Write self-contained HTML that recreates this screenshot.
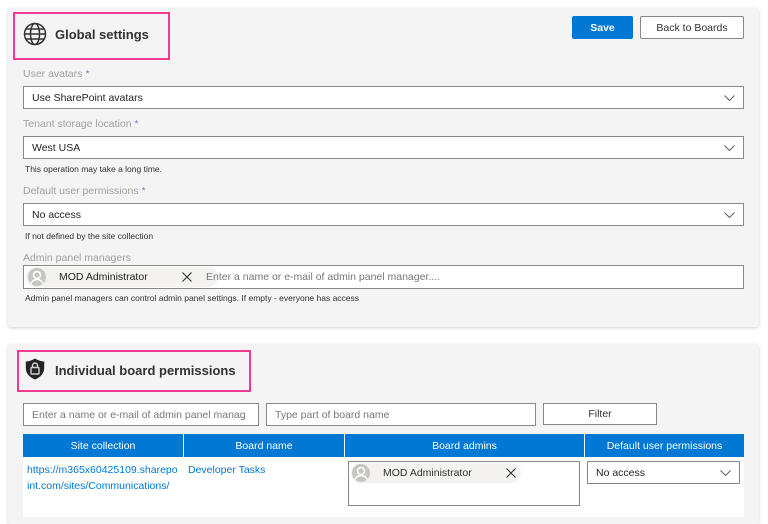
<!DOCTYPE html>
<html><head><meta charset="utf-8"><style>
*{box-sizing:border-box;margin:0;padding:0}
body{width:768px;height:512px;overflow:hidden;background:#fff;font-family:"Liberation Sans",sans-serif;color:#323130;position:relative}
.a{position:absolute}
.card{position:absolute;left:8px;width:751px;background:#f4f4f4;border-radius:3px;box-shadow:0 1px 3px rgba(0,0,0,.18)}
.pink{position:absolute;border:2px solid #f3398f}
.title{position:absolute;font-size:13px;font-weight:bold;color:#323130}
.lbl{position:absolute;left:23px;font-size:10.5px;color:#a19f9d}
.lbl b{color:#6b8fc4;font-weight:normal}
.box{position:absolute;background:#fff;border:1px solid #8a8886;font-size:10.5px;color:#201f1e;padding-left:8px;display:flex;align-items:center;white-space:nowrap;overflow:hidden}
.help{position:absolute;left:25px;font-size:8.5px;color:#323130}
.chev{position:absolute;right:8px;top:50%;margin-top:-3px}
.th{position:absolute;top:434px;height:23px;background:#0078d4;color:#fff;font-size:10.5px;display:flex;align-items:center;justify-content:center}
.ph{color:#777}
</style></head><body>
<div class="card" style="top:8px;height:319px"></div>
<div class="card" style="top:344px;height:180px"></div>

<div class="pink" style="left:13px;top:12px;width:157px;height:48px"></div>
<svg class="a" style="left:23px;top:22px" width="24" height="24" viewBox="0 0 24 24" fill="none" stroke="#323130" stroke-width="1.5"><circle cx="12" cy="12" r="10.5"/><ellipse cx="12" cy="12" rx="4.5" ry="10.5"/><line x1="1.5" y1="12" x2="22.5" y2="12"/><line x1="3" y1="7" x2="21" y2="7"/><line x1="3" y1="17" x2="21" y2="17"/></svg>
<div class="title" style="left:55px;top:27px">Global settings</div>

<div class="a" style="left:572px;top:16px;width:61px;height:23px;background:#0078d4;color:#fff;font-size:10.5px;font-weight:bold;display:flex;align-items:center;justify-content:center;border-radius:2px">Save</div>
<div class="a" style="left:640px;top:16px;width:104px;height:23px;background:#fff;border:1px solid #8a8886;font-size:10.5px;display:flex;align-items:center;justify-content:center;border-radius:2px">Back to Boards</div>

<div class="lbl" style="top:68px">User avatars <b>*</b></div>
<div class="box" style="left:23px;top:86px;width:721px;height:23px">Use SharePoint avatars<svg class="chev" width="11" height="6" viewBox="0 0 11 6"><path d="M0.5 0.5L5.5 5.5L10.5 0.5" fill="none" stroke="#605e5c"/></svg></div>

<div class="lbl" style="top:118px">Tenant storage location <b>*</b></div>
<div class="box" style="left:23px;top:136px;width:721px;height:23px">West USA<svg class="chev" width="11" height="6" viewBox="0 0 11 6"><path d="M0.5 0.5L5.5 5.5L10.5 0.5" fill="none" stroke="#605e5c"/></svg></div>
<div class="help" style="top:164px">This operation may take a long time.</div>

<div class="lbl" style="top:185px">Default user permissions <b>*</b></div>
<div class="box" style="left:23px;top:203px;width:721px;height:23px">No access<svg class="chev" width="11" height="6" viewBox="0 0 11 6"><path d="M0.5 0.5L5.5 5.5L10.5 0.5" fill="none" stroke="#605e5c"/></svg></div>
<div class="help" style="top:231px">If not defined by the site collection</div>

<div class="lbl" style="top:252px">Admin panel managers</div>
<div class="box" style="left:23px;top:265px;width:721px;height:24px;padding-left:0">
 <div class="a" style="left:2px;top:1px;width:192px;height:20px;background:#f3f2f1;border-radius:10px"></div>
 <svg class="a" style="left:4px;top:2px" width="18" height="18" viewBox="0 0 18 18"><circle cx="9" cy="9" r="9" fill="#c8c6c4"/><circle cx="9" cy="7" r="3.5" fill="none" stroke="#fff" stroke-width="1.5"/><path d="M3 15.5c1.5-3 3.5-4 6-4s4.5 1 6 4" fill="none" stroke="#fff" stroke-width="1.5"/></svg>
 <span class="a" style="left:35px;top:5px">MOD Administrator</span>
 <svg class="a" style="left:158px;top:6px" width="10" height="10" viewBox="0 0 10 10" stroke="#323130" stroke-width="1.1"><path d="M0.5 0.5L9.5 9.5M9.5 0.5L0.5 9.5"/></svg>
 <span class="a ph" style="left:182px;top:5px">Enter a name or e-mail of admin panel manager....</span>
</div>
<div class="help" style="top:293px">Admin panel managers can control admin panel settings. If empty - everyone has access</div>

<div class="pink" style="left:17px;top:350px;width:234px;height:42px"></div>
<svg class="a" style="left:25px;top:358px" width="20" height="22" viewBox="0 0 20 22"><path d="M10 0.5C7 2.5 4 3.3 0.8 3.5V10c0 5.5 3.8 9.3 9.2 11.5c5.4-2.2 9.2-6 9.2-11.5V3.5C16 3.3 13 2.5 10 0.5Z" fill="#252423"/><rect x="6" y="9.5" width="8" height="6.5" rx="0.8" fill="none" stroke="#d0d0d0" stroke-width="1.4"/><path d="M7.5 9.5V7.5a2.5 2.5 0 0 1 5 0v2" fill="none" stroke="#d0d0d0" stroke-width="1.4"/></svg>
<div class="title" style="left:55px;top:363px">Individual board permissions</div>

<div class="box ph" style="left:23px;top:403px;width:236px;height:23px;color:#777">Enter a name or e-mail of admin panel manag</div>
<div class="box ph" style="left:266px;top:403px;width:270px;height:23px;color:#777">Type part of board name</div>
<div class="a" style="left:543px;top:403px;width:114px;height:22px;background:#fff;border:1px solid #8a8886;font-size:10.5px;display:flex;align-items:center;justify-content:center">Filter</div>

<div class="a" style="left:23px;top:457px;width:721px;height:60px;background:#fff"></div>
<div class="th" style="left:23px;width:160px">Site collection</div>
<div class="th" style="left:184px;width:160px">Board name</div>
<div class="th" style="left:345px;width:239px">Board admins</div>
<div class="th" style="left:585px;width:159px">Default user permissions</div>

<div class="a" style="left:27px;top:462px;font-size:10.5px;color:#0078d4;line-height:16px">https://m365x60425109.sharepo<br>int.com/sites/Communications/</div>
<div class="a" style="left:188px;top:462px;font-size:10.5px;color:#0078d4;line-height:16px">Developer Tasks</div>

<div class="a" style="left:348px;top:461px;width:232px;height:45px;background:#fff;border:1px solid #8a8886">
 <div class="a" style="left:2px;top:1px;width:170px;height:20px;background:#f3f2f1;border-radius:10px"></div>
 <svg class="a" style="left:3px;top:2px" width="18" height="18" viewBox="0 0 18 18"><circle cx="9" cy="9" r="9" fill="#c8c6c4"/><circle cx="9" cy="7" r="3.5" fill="none" stroke="#fff" stroke-width="1.5"/><path d="M3 15.5c1.5-3 3.5-4 6-4s4.5 1 6 4" fill="none" stroke="#fff" stroke-width="1.5"/></svg>
 <span class="a" style="left:34px;top:5px;font-size:10.5px">MOD Administrator</span>
 <svg class="a" style="left:157px;top:6px" width="10" height="10" viewBox="0 0 10 10" stroke="#323130" stroke-width="1.1"><path d="M0.5 0.5L9.5 9.5M9.5 0.5L0.5 9.5"/></svg>
</div>
<div class="box" style="left:587px;top:461px;width:153px;height:23px">No access<svg class="chev" width="11" height="6" viewBox="0 0 11 6"><path d="M0.5 0.5L5.5 5.5L10.5 0.5" fill="none" stroke="#605e5c"/></svg></div>
</body></html>
